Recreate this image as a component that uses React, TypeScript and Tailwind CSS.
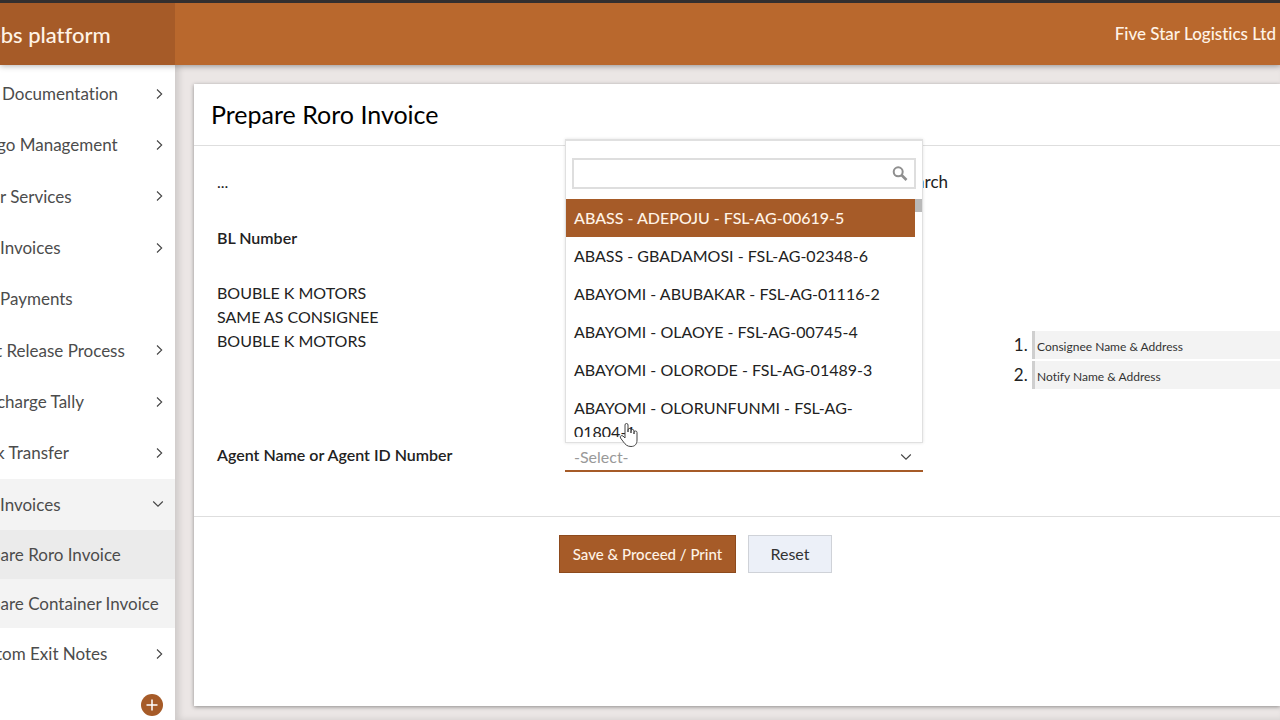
import React from "react";

const menu = [
  { label: "Documentation", indent: "pl-[2px]", arrow: true },
  { label: "go Management", indent: "-ml-[3px]", arrow: true },
  { label: "r Services", indent: "pl-0", arrow: true },
  { label: "Invoices", indent: "pl-0", arrow: true },
  { label: "Payments", indent: "pl-0", arrow: false },
  { label: "t Release Process", indent: "-ml-1", arrow: true },
  { label: "charge Tally", indent: "-ml-[3px]", arrow: true },
  { label: "k Transfer", indent: "-ml-1", arrow: true },
];

const agents = [
  "ABASS - ADEPOJU - FSL-AG-00619-5",
  "ABASS - GBADAMOSI - FSL-AG-02348-6",
  "ABAYOMI - ABUBAKAR - FSL-AG-01116-2",
  "ABAYOMI - OLAOYE - FSL-AG-00745-4",
  "ABAYOMI - OLORODE - FSL-AG-01489-3",
  "ABAYOMI - OLORUNFUNMI - FSL-AG-01804-1",
];

function Chevron({ down = false }: { down?: boolean }) {
  return (
    <svg
      viewBox="0 0 12 12"
      className="h-3 w-3 shrink-0"
      fill="none"
      stroke="#444"
      strokeWidth="1.1"
      aria-hidden="true"
    >
      <path d={down ? "M1.2 3.5 6 8.200l4.800-4.700" : "M4 1.500 8.700 6 4 10.500"} />
    </svg>
  );
}

function MenuLink({
  label,
  indent,
  arrow,
}: {
  label: string;
  indent: string;
  arrow: boolean;
}) {
  return (
    <a href="#" className="flex items-center justify-between pr-[10px]">
      <span className={indent}>{label}</span>
      {arrow && <Chevron />}
    </a>
  );
}

function Sidebar() {
  return (
    <aside className="z-10 flex w-[175px] shrink-0 flex-col overflow-hidden bg-white text-[17px] whitespace-nowrap text-[#4c4c4c]">
      <nav className="pt-[3px]">
        <div className="grid h-[462px] grid-rows-9">
          {menu.map((item) => (
            <MenuLink key={item.label} {...item} />
          ))}
          <a href="#" className="flex items-center justify-between bg-[#f3f3f3] pr-[11px]">
            <span>Invoices</span>
            <Chevron down />
          </a>
        </div>
        <a href="#" className="flex h-[49px] items-center bg-[#ebebeb]">
          <span className="-ml-[9px]">pare Roro Invoice</span>
        </a>
        <a href="#" className="flex h-[49px] items-center bg-[#f3f3f3]">
          <span className="-ml-[9px]">pare Container Invoice</span>
        </a>
        <div className="grid h-[51px]">
          <MenuLink label="tom Exit Notes" indent="-ml-1" arrow />
        </div>
      </nav>
      <div className="flex justify-end pt-[15px] pr-3">
        <button
          type="button"
          aria-label="Add"
          className="flex h-[22px] w-[22px] items-center justify-center rounded-full bg-[#a65b28]"
        >
          <svg viewBox="0 0 12 12" className="h-3 w-3" stroke="#fff" strokeWidth="1.5" aria-hidden="true">
            <path d="M6 .5v11M.5 6h11" />
          </svg>
        </button>
      </div>
    </aside>
  );
}

function AgentDropdown() {
  return (
    <div className="absolute bottom-[29px] left-0 w-full border border-t-2 border-[#e0e0e0] bg-white pb-[5px] shadow-[0_0_3px_rgba(0,0,0,0.12)]">
      <div className="px-[6px] pt-[17px] pb-[10px]">
        <div className="flex h-[31px] items-center border-2 border-[#dedede] pr-[6px]">
          <input type="text" aria-label="Search agents" className="min-w-0 flex-1 px-2 outline-none" />
          <svg viewBox="0 0 16 16" className="h-4 w-4" fill="none" stroke="#8f8f8f" aria-hidden="true">
            <circle cx="6.200" cy="5.800" r="4.500" strokeWidth="2" />
            <path d="m9.500 9 5 5" strokeWidth="2.600" />
          </svg>
        </div>
      </div>
      <div className="flex h-[238px]">
        <ul role="listbox" aria-label="Agents" className="min-w-0 flex-1 overflow-hidden">
          {agents.map((agent, i) => (
            <li
              key={agent}
              role="option"
              aria-selected={i === 0}
              className={
                i === 0
                  ? "bg-[#a65b28] py-[7px] pr-6 pl-2 leading-6 font-medium text-[#fff3e6]"
                  : "py-[7px] pr-6 pl-2 leading-6"
              }
            >
              {agent}
            </li>
          ))}
        </ul>
        <div className="h-[13px] w-[7px] bg-[#b9b9b9]" />
      </div>
      <svg
        viewBox="0 0 20 26"
        className="absolute -bottom-[6px] left-[53px] h-[26px] w-5"
        fill="#fff"
        stroke="#444"
        strokeWidth="1"
        strokeLinejoin="round"
        aria-hidden="true"
      >
        <path d="M6 15V3a1.500 1.500 0 0 1 3 0v7V8a1.500 1.500 0 0 1 3 0v3-2a1.500 1.500 0 0 1 3 0v3-1.500a1.500 1.500 0 0 1 3 0V18c0 4-2 6.500-6 6.500S6.500 22.500 4.500 20L1.500 16c-1-2 1-3 2.500-2l2 2z" />
      </svg>
    </div>
  );
}

function InvoiceForm() {
  return (
    <form className="flex min-h-[622px] flex-col bg-white shadow-[0_1px_4px_rgba(0,0,0,0.4)]">
      <div className="flex h-[62px] items-center border-b border-[#dedede] px-[17px]">
        <h1 className="text-[25px] text-black">Prepare Roro Invoice</h1>
      </div>
      <div className="grid grid-cols-[348px_383px_1fr] border-b border-[#dedede] pt-6 pb-11 pl-[23px] leading-6">
        <p>...</p>
        <p className="text-right text-[17px]">Search</p>
        <span />
        <p className="col-span-3 mt-8 font-semibold">BL Number</p>
        <div className="mt-[31px]">
          <p>BOUBLE K MOTORS</p>
          <p>SAME AS CONSIGNEE</p>
          <p>BOUBLE K MOTORS</p>
        </div>
        <span />
        <ol className="mt-[81px] list-decimal pl-[84px] text-[17px]">
          {["Consignee Name & Address", "Notify Name & Address"].map((name) => (
            <li key={name} className="mb-[2px]">
              <span className="flex h-7 items-center border-l-3 border-[#cfcfcf] bg-[#f3f3f3] pt-[3px] pl-[2px] text-[12px] text-[#333]">
                {name}
              </span>
            </li>
          ))}
        </ol>
        <label htmlFor="agent" className="mt-[52px] self-start font-semibold">
          Agent Name or Agent ID Number
        </label>
        <div className="relative mt-[52px] w-[358px]">
          <div className="flex h-[29px] items-center border-b-2 border-[#a65b28] pr-[11px]">
            <select id="agent" className="min-w-0 flex-1 appearance-none pl-[9px] text-[#999] outline-none">
              <option>-Select-</option>
            </select>
            <Chevron down />
          </div>
          <AgentDropdown />
        </div>
      </div>
      <div className="flex gap-3 pt-[18px] pl-[365px]">
        <button
          type="submit"
          className="h-[38px] w-[177px] border border-[#8d4a1d] bg-[#a65b28] text-[15px] font-medium text-[#fff3e6]"
        >
          Save &amp; Proceed / Print
        </button>
        <button type="reset" className="h-[38px] w-[84px] border border-[#cfd2d8] bg-[#ecf0f8] text-[#333]">
          Reset
        </button>
      </div>
    </form>
  );
}

export default function App() {
  return (
    <div className="flex h-screen flex-col overflow-hidden bg-[#ebe6e5] font-[Lato,sans-serif] text-[16px] text-[#222] [font-variant-ligatures:none]">
      <header className="z-20 flex h-[65px] shrink-0 border-t-3 border-[#332f2f] bg-[#b9682d] text-[#fff3e6] shadow-[0_1px_6px_rgba(0,0,0,0.3)]">
        <div className="flex w-[175px] items-center overflow-hidden bg-[#a65b28] text-[22px] font-medium whitespace-nowrap">
          <span className="-ml-[11px]">ebs platform</span>
        </div>
        <div className="flex flex-1 items-center justify-end pr-1 text-[17px] font-medium">
          Five Star Logistics Ltd
        </div>
      </header>
      <div className="flex min-h-0 flex-1">
        <Sidebar />
        <main className="min-w-0 flex-1 pt-[19px] pl-[19px] shadow-[inset_4px_0_6px_rgba(0,0,0,0.12)]">
          <InvoiceForm />
        </main>
      </div>
    </div>
  );
}
